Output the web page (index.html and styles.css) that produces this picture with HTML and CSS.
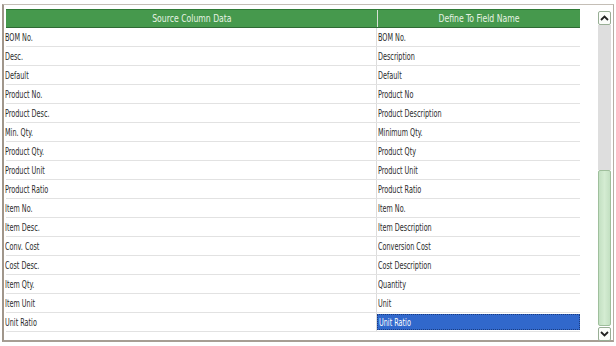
FILE: index.html
```html
<!DOCTYPE html>
<html>
<head>
<meta charset="utf-8">
<link rel="stylesheet" href="styles.css">
</head>
<body>
<div class="frame">
  <div class="grid">
    <div class="head">
      <div class="hcell c1"><span class="t">Source Column Data</span></div>
      <div class="hcell c2"><span class="t">Define To Field Name</span></div>
    </div>
    <div class="row"><div class="cell c1"><span class="t">BOM No.</span></div><div class="cell c2"><span class="t">BOM No.</span></div></div>
    <div class="row"><div class="cell c1"><span class="t">Desc.</span></div><div class="cell c2"><span class="t">Description</span></div></div>
    <div class="row"><div class="cell c1"><span class="t">Default</span></div><div class="cell c2"><span class="t">Default</span></div></div>
    <div class="row"><div class="cell c1"><span class="t">Product No.</span></div><div class="cell c2"><span class="t">Product No</span></div></div>
    <div class="row"><div class="cell c1"><span class="t">Product Desc.</span></div><div class="cell c2"><span class="t">Product Description</span></div></div>
    <div class="row"><div class="cell c1"><span class="t">Min. Qty.</span></div><div class="cell c2"><span class="t">Minimum Qty.</span></div></div>
    <div class="row"><div class="cell c1"><span class="t">Product Qty.</span></div><div class="cell c2"><span class="t">Product Qty</span></div></div>
    <div class="row"><div class="cell c1"><span class="t">Product Unit</span></div><div class="cell c2"><span class="t">Product Unit</span></div></div>
    <div class="row"><div class="cell c1"><span class="t">Product Ratio</span></div><div class="cell c2"><span class="t">Product Ratio</span></div></div>
    <div class="row"><div class="cell c1"><span class="t">Item No.</span></div><div class="cell c2"><span class="t">Item No.</span></div></div>
    <div class="row"><div class="cell c1"><span class="t">Item Desc.</span></div><div class="cell c2"><span class="t">Item Description</span></div></div>
    <div class="row"><div class="cell c1"><span class="t">Conv. Cost</span></div><div class="cell c2"><span class="t">Conversion Cost</span></div></div>
    <div class="row"><div class="cell c1"><span class="t">Cost Desc.</span></div><div class="cell c2"><span class="t">Cost Description</span></div></div>
    <div class="row"><div class="cell c1"><span class="t">Item Qty.</span></div><div class="cell c2"><span class="t">Quantity</span></div></div>
    <div class="row"><div class="cell c1"><span class="t">Item Unit</span></div><div class="cell c2"><span class="t">Unit</span></div></div>
    <div class="row"><div class="cell c1"><span class="t">Unit Ratio</span></div><div class="cell c2"><span class="sel"><span class="t">Unit Ratio</span></span></div></div>
  </div>
  <div class="scroll">
    <div class="btn">
      <svg width="9" height="6" viewBox="0 0 9 6"><path d="M1 5 L4.5 1.5 L8 5" fill="none" stroke="#222" stroke-width="1.8"/></svg>
    </div>
    <div class="track"></div>
    <div class="thumb"></div>
    <div class="btn">
      <svg width="9" height="6" viewBox="0 0 9 6"><path d="M1 1 L4.5 4.5 L8 1" fill="none" stroke="#222" stroke-width="1.8"/></svg>
    </div>
  </div>
</div>
</body>
</html>
```
FILE: styles.css
```css
html, body {
  margin: 0;
  padding: 0;
  background: #ffffff;
}
body {
  font-family: "DejaVu Sans Condensed", "DejaVu Sans", sans-serif;
  font-stretch: condensed;
  font-size: 10px;
  color: #2a2a2a;
}
.t {
  display: inline-block;
  transform: scaleX(0.72);
  transform-origin: 0 50%;
  white-space: nowrap;
}
.frame {
  margin: 4px 2px 1px 2px;
  height: 338px;
  border-top: 1px solid #c4beb6;
  border-right: 1px solid #b5ada4;
  border-bottom: 2px solid #a79e94;
  border-left: 2px solid #a0968b;
  display: flex;
  padding: 4px 1px 0 2px;
  box-sizing: border-box;
}
.grid {
  width: 574px;
  display: flex;
  flex-direction: column;
}
.head {
  display: flex;
  height: 19px;
  background: #46994d;
  border-top: 1px solid #2f7a36;
  border-bottom: 1px solid #2f6a34;
  box-sizing: border-box;
}
.hcell {
  color: #e6f3e4;
  text-align: center;
  line-height: 17px;
  font-size: 11px;
}
.hcell .t {
  transform: scaleX(0.78);
  transform-origin: 50% 50%;
}
.hcell.c1 {
  border-right: 1px solid #d8e0d6;
}
.c1 { width: 371px; flex: none; }
.c2 { flex: 1; }
.row {
  display: flex;
  height: 19px;
  border-bottom: 1px solid #e2e2e2;
  box-sizing: border-box;
}
.cell {
  line-height: 18px;
  padding-top: 1px;
  white-space: nowrap;
}
.cell.c1 {
  border-right: 1px solid #dcdcdc;
  margin-left: -1px;
}
.cell.c2 {
  padding-left: 1px;
  display: flex;
}
.sel {
  flex: 1;
  margin: 0 0 1px -1px;
  background: #3168cc;
  color: #ffffff;
  border: 1px dotted #1a3c80;
  line-height: 15px;
  padding-left: 1px;
}
.scroll {
  margin-left: 18px;
  margin-top: 2px;
  width: 13px;
  height: 330px;
  display: flex;
  flex-direction: column;
}
.btn {
  height: 14px;
  flex: none;
  background: #fbfdfa;
  border: 1px solid #98ae95;
  border-radius: 2px;
  box-sizing: border-box;
  display: flex;
  align-items: center;
  justify-content: center;
}
.track {
  height: 145px;
  background: #dedede;
}
.thumb {
  flex: 1;
  background: linear-gradient(to right, #c3e0c2, #d4ecd2 50%, #c3e0c2);
  border: 1px solid #9fbf9c;
  border-radius: 2px;
  box-sizing: border-box;
  margin-bottom: 1px;
}
```
